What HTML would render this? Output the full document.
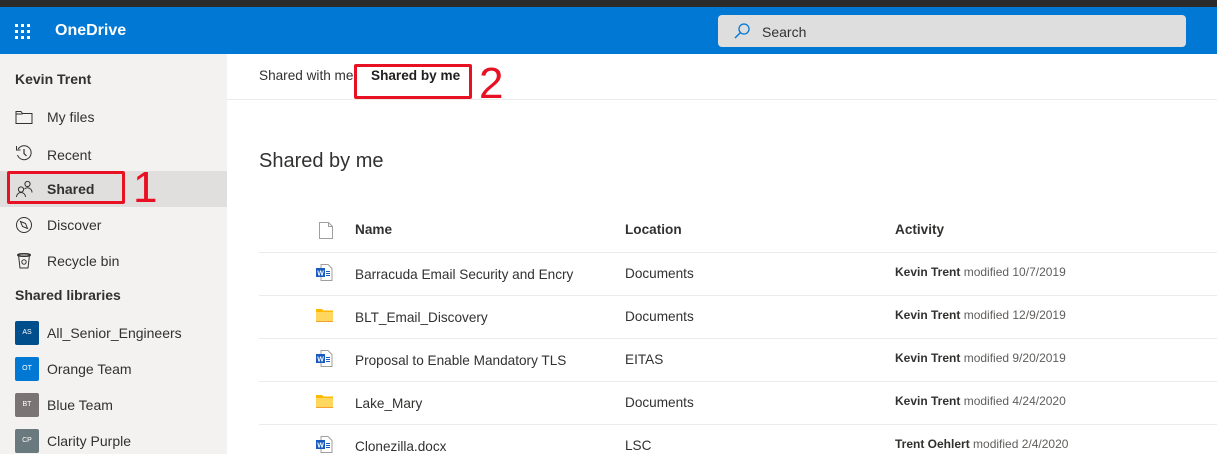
<!DOCTYPE html>
<html><head><meta charset="utf-8"><style>
*{margin:0;padding:0;box-sizing:border-box}
body{width:1217px;height:454px;overflow:hidden;background:#fff;font-family:"Liberation Sans",sans-serif;color:#323130;position:relative}
.abs{position:absolute}
#dark{left:0;top:0;width:1217px;height:7px;background:#2b2b2b}
#bar{left:0;top:7px;width:1217px;height:47px;background:#0078d4}
#side{left:0;top:54px;width:227px;height:400px;background:#f3f2f1}
.nav{position:absolute;left:47px;font-size:14px;color:#323130}
.ic{position:absolute;left:15px}
.av{position:absolute;left:15px;width:24px;height:24px;border-radius:2px;color:#fff;font-size:7px;text-align:center;line-height:24px}
.row{position:absolute;left:259px;width:958px;height:1px;background:#edebe9}
.t{position:absolute;font-size:13.6px;color:#323130}
.act{position:absolute;left:895px;font-size:12px;color:#605e5c}
.act b{color:#323130}
.red{position:absolute;border:3px solid #e81123;border-radius:2px}
.num{position:absolute;color:#e81123;font-size:44px;font-family:"Liberation Sans",sans-serif}
</style></head><body>
<div id="dark" class="abs"></div>
<div id="bar" class="abs"></div>
<svg class="abs" style="left:14px;top:23px" width="18" height="18" viewBox="0 0 18 18" fill="#fff">
<rect x="1" y="1" width="3" height="3"/><rect x="7" y="1" width="3" height="3"/><rect x="13" y="1" width="3" height="3"/>
<rect x="1" y="7" width="3" height="3"/><rect x="7" y="7" width="3" height="3"/><rect x="13" y="7" width="3" height="3"/>
<rect x="1" y="13" width="3" height="3"/><rect x="7" y="13" width="3" height="3"/><rect x="13" y="13" width="3" height="3"/></svg>
<div class="abs" style="left:55px;top:22px;color:#fff;font-weight:bold;font-size:16px">OneDrive</div>
<div class="abs" style="left:718px;top:15px;width:468px;height:32px;background:#dedede;border-radius:4px"></div>
<svg class="abs" style="left:734px;top:23px" width="16" height="17" viewBox="0 0 16 17"><circle cx="10" cy="6" r="5" fill="none" stroke="#0078d4" stroke-width="1.3"/><line x1="6.4" y1="9.6" x2="1" y2="15" stroke="#0078d4" stroke-width="1.4"/></svg>
<div class="abs" style="left:762px;top:24px;font-size:14px;color:#323130">Search</div>

<div id="side" class="abs"></div>
<div class="abs" style="left:0;top:171px;width:227px;height:36px;background:#e1dfdd"></div>
<div class="nav" style="left:15px;top:71px;font-weight:bold">Kevin Trent</div>
<svg class="ic" style="top:110px" width="18" height="14" viewBox="0 0 18 14"><path d="M1 1.5h5l1.5 2H17v10H1z M1 4h6.5" fill="none" stroke="#323130" stroke-width="1"/></svg>
<div class="nav" style="top:109px">My files</div>
<svg class="ic" style="top:144px" width="18" height="18" viewBox="0 0 18 18"><path d="M3.2 5A7 7 0 1 1 2.5 11" fill="none" stroke="#323130" stroke-width="1"/><path d="M1.5 2v4h4" fill="none" stroke="#323130" stroke-width="1"/><path d="M9 5v4.5l2.5 2.5" fill="none" stroke="#323130" stroke-width="1.2"/></svg>
<div class="nav" style="top:147px">Recent</div>
<svg class="ic" style="top:180px" width="18" height="18" viewBox="0 0 18 18" fill="none" stroke="#323130" stroke-width="1"><circle cx="6" cy="9.5" r="2.6"/><path d="M1.5 17a4.5 4.5 0 0 1 9 0"/><circle cx="12.5" cy="4" r="2.6"/><path d="M9.5 9a4.5 4.5 0 0 1 7.5 3.5"/></svg>
<div class="nav" style="top:181px;font-weight:bold">Shared</div>
<svg class="ic" style="top:216px" width="18" height="18" viewBox="0 0 18 18" fill="none" stroke="#323130" stroke-width="1"><circle cx="9" cy="9" r="7.5"/><path d="M5.5 5.5l5 2 2 5-5-2z"/></svg>
<div class="nav" style="top:217px">Discover</div>
<svg class="ic" style="top:252px" width="18" height="18" viewBox="0 0 18 18" fill="none" stroke="#323130" stroke-width="1"><path d="M2.5 3h13M3.5 3l1.5 13h8l1.5-13"/><ellipse cx="9" cy="3" rx="6.5" ry="1.5"/><circle cx="9" cy="10" r="2.2"/></svg>
<div class="nav" style="top:253px">Recycle bin</div>
<div class="nav" style="left:15px;top:287px;font-weight:bold">Shared libraries</div>
<div class="av" style="top:321px;background:#004e8c">AS</div><div class="nav" style="top:325px">All_Senior_Engineers</div>
<div class="av" style="top:357px;background:#0078d4">OT</div><div class="nav" style="top:361px">Orange Team</div>
<div class="av" style="top:393px;background:#7a7574">BT</div><div class="nav" style="top:397px">Blue Team</div>
<div class="av" style="top:429px;background:#69797e">CP</div><div class="nav" style="top:433px">Clarity Purple</div>
<div class="red" style="left:7px;top:171px;width:118px;height:33px"></div>
<div class="num" style="left:133px;top:163px">1</div>

<div class="t" style="left:259px;top:68px">Shared with me</div>
<div class="t" style="left:371px;top:68px;font-weight:bold;color:#201f1e">Shared by me</div>
<div class="abs" style="left:227px;top:99px;width:990px;height:1px;background:#edebe9"></div>
<div class="red" style="left:354px;top:64px;width:118px;height:35px"></div>
<div class="num" style="left:479px;top:59px">2</div>

<div class="abs" style="left:259px;top:150px;font-size:20px;color:#323130">Shared by me</div>

<svg class="abs" style="left:319px;top:222px" width="14" height="17" viewBox="0 0 14 17"><path d="M.5.5h9l4 4v12H.5z M9.5.5v4h4" fill="none" stroke="#a19f9d"/></svg>
<div class="t" style="left:355px;top:222px;font-weight:bold">Name</div>
<div class="t" style="left:625px;top:222px;font-weight:bold">Location</div>
<div class="t" style="left:895px;top:222px;font-weight:bold">Activity</div>
<div class="row" style="top:252px"></div>
<div class="row" style="top:295px"></div>
<div class="row" style="top:338px"></div>
<div class="row" style="top:381px"></div>
<div class="row" style="top:424px"></div>

<svg class="abs" style="left:316px;top:264px" width="17" height="17" viewBox="0 0 17 17"><path d="M5 .5h7l4 4v12H5z" fill="#fff" stroke="#a19f9d"/><rect x="10" y="7" width="4" height="1" fill="#185abd"/><rect x="10" y="9" width="4" height="1" fill="#185abd"/><rect x="10" y="11" width="4" height="1" fill="#185abd"/><rect x="0" y="4" width="9" height="9" fill="#185abd"/><text x="4.5" y="11.3" font-size="7" font-weight="bold" fill="#fff" text-anchor="middle" font-family="Liberation Sans">W</text></svg>
<svg class="abs" style="left:316px;top:309px" width="17" height="13" viewBox="0 0 17 13"><path d="M0 0h6l1.5 1.5H17V13H0z" fill="#ffb900"/><rect x="0" y="3" width="17" height="10" fill="#ffd75e"/><rect x="0" y="12" width="17" height="1" fill="#f7a12a"/></svg>
<svg class="abs" style="left:316px;top:350px" width="17" height="17" viewBox="0 0 17 17"><path d="M5 .5h7l4 4v12H5z" fill="#fff" stroke="#a19f9d"/><rect x="10" y="7" width="4" height="1" fill="#185abd"/><rect x="10" y="9" width="4" height="1" fill="#185abd"/><rect x="10" y="11" width="4" height="1" fill="#185abd"/><rect x="0" y="4" width="9" height="9" fill="#185abd"/><text x="4.5" y="11.3" font-size="7" font-weight="bold" fill="#fff" text-anchor="middle" font-family="Liberation Sans">W</text></svg>
<svg class="abs" style="left:316px;top:395px" width="17" height="13" viewBox="0 0 17 13"><path d="M0 0h6l1.5 1.5H17V13H0z" fill="#ffb900"/><rect x="0" y="3" width="17" height="10" fill="#ffd75e"/><rect x="0" y="12" width="17" height="1" fill="#f7a12a"/></svg>
<svg class="abs" style="left:316px;top:436px" width="17" height="17" viewBox="0 0 17 17"><path d="M5 .5h7l4 4v12H5z" fill="#fff" stroke="#a19f9d"/><rect x="10" y="7" width="4" height="1" fill="#185abd"/><rect x="10" y="9" width="4" height="1" fill="#185abd"/><rect x="10" y="11" width="4" height="1" fill="#185abd"/><rect x="0" y="4" width="9" height="9" fill="#185abd"/><text x="4.5" y="11.3" font-size="7" font-weight="bold" fill="#fff" text-anchor="middle" font-family="Liberation Sans">W</text></svg>

<div class="t" style="left:355px;top:267px">Barracuda Email Security and Encry</div>
<div class="t" style="left:625px;top:266px">Documents</div>
<div class="act" style="top:265px"><b>Kevin Trent</b> modified 10/7/2019</div>
<div class="t" style="left:355px;top:310px">BLT_Email_Discovery</div>
<div class="t" style="left:625px;top:309px">Documents</div>
<div class="act" style="top:308px"><b>Kevin Trent</b> modified 12/9/2019</div>
<div class="t" style="left:355px;top:353px">Proposal to Enable Mandatory TLS</div>
<div class="t" style="left:625px;top:352px">EITAS</div>
<div class="act" style="top:351px"><b>Kevin Trent</b> modified 9/20/2019</div>
<div class="t" style="left:355px;top:396px">Lake_Mary</div>
<div class="t" style="left:625px;top:395px">Documents</div>
<div class="act" style="top:394px"><b>Kevin Trent</b> modified 4/24/2020</div>
<div class="t" style="left:355px;top:439px">Clonezilla.docx</div>
<div class="t" style="left:625px;top:438px">LSC</div>
<div class="act" style="top:437px"><b>Trent Oehlert</b> modified 2/4/2020</div>
</body></html>
